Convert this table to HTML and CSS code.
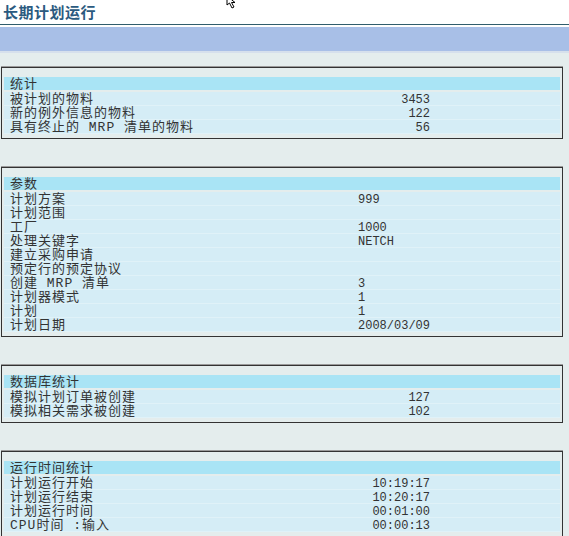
FILE: index.html
```html
<!DOCTYPE html>
<html lang="zh-CN">
<head>
<meta charset="utf-8">
<title>长期计划运行</title>
<link rel="stylesheet" href="styles.css">
</head>
<body>
<div class="top">
  <div class="title">长期计划运行</div>
  <div class="band"></div>
  <div class="band-edge"></div>
</div>
<svg class="cursor" width="12" height="10" viewBox="0 0 12 10"><path d="M1 -4 L1 5 L3.5 3 L6 8 L8 7 L5.5 2.5 L9 2.5 Z" fill="#fff" stroke="#000" stroke-width="1"/></svg>
<main class="content">
  <section class="box">
    <div class="hdr">统计</div>
    <div class="row"><span class="lbl">被计划的物料</span><span class="val r">3453</span></div>
    <div class="row"><span class="lbl">新的例外信息的物料</span><span class="val r">122</span></div>
    <div class="row"><span class="lbl">具有终止的 MRP 清单的物料</span><span class="val r">56</span></div>
  </section>
  <section class="box">
    <div class="hdr">参数</div>
    <div class="row"><span class="lbl">计划方案</span><span class="val">999</span></div>
    <div class="row"><span class="lbl">计划范围</span><span class="val"></span></div>
    <div class="row"><span class="lbl">工厂</span><span class="val">1000</span></div>
    <div class="row"><span class="lbl">处理关键字</span><span class="val">NETCH</span></div>
    <div class="row"><span class="lbl">建立采购申请</span><span class="val"></span></div>
    <div class="row"><span class="lbl">预定行的预定协议</span><span class="val"></span></div>
    <div class="row"><span class="lbl">创建 MRP 清单</span><span class="val">3</span></div>
    <div class="row"><span class="lbl">计划器模式</span><span class="val">1</span></div>
    <div class="row"><span class="lbl">计划</span><span class="val">1</span></div>
    <div class="row"><span class="lbl">计划日期</span><span class="val">2008/03/09</span></div>
  </section>
  <section class="box">
    <div class="hdr">数据库统计</div>
    <div class="row"><span class="lbl">模拟计划订单被创建</span><span class="val r">127</span></div>
    <div class="row"><span class="lbl">模拟相关需求被创建</span><span class="val r">102</span></div>
  </section>
  <section class="box">
    <div class="hdr">运行时间统计</div>
    <div class="row"><span class="lbl">计划运行开始</span><span class="val r">10:19:17</span></div>
    <div class="row"><span class="lbl">计划运行结束</span><span class="val r">10:20:17</span></div>
    <div class="row"><span class="lbl">计划运行时间</span><span class="val r">00:01:00</span></div>
    <div class="row"><span class="lbl">CPU时间 :输入</span><span class="val r">00:00:13</span></div>
  </section>
</main>
</body>
</html>
```
FILE: styles.css
```css
html, body {
  margin: 0;
  padding: 0;
}
body {
  background: #e4eded;
  width: 569px;
  height: 536px;
  overflow: hidden;
  position: relative;
  font-family: "Liberation Mono", "Noto Sans CJK SC", monospace;
  color: #2a2a2a;
}
.top {
  background: #ffffff;
}
.title {
  height: 25px;
  box-sizing: border-box;
  border-bottom: 1px solid #2f5d6c;
  padding-left: 3px;
  font-family: "Noto Sans CJK SC", sans-serif;
  font-weight: bold;
  font-size: 15px;
  letter-spacing: 0.5px;
  line-height: 24px;
  color: #2b5a80;
}
.band {
  margin-top: 2px;
  height: 24px;
  background: #a8bfe7;
}
.band-edge {
  height: 2px;
  background: #d6e0ec;
}
.cursor {
  position: absolute;
  left: 226px;
  top: 0;
}
.content {
  display: flex;
  flex-direction: column;
  gap: 28px;
  padding-top: 14px;
}
.box {
  margin-left: 1px;
  width: 562px;
  box-sizing: border-box;
  border: 1px solid #333;
  box-shadow: 0 -1px 0 #9a9a9a;
  padding: 9px 2px 4px 2px;
}
.hdr {
  height: 13px;
  line-height: 15px;
  margin-bottom: 2px;
  background: #a9e4f5;
  padding-left: 6px;
  font-size: 13px;
  letter-spacing: 1px;
  color: #333;
}
.row {
  display: grid;
  grid-template-columns: 354px 72px 1fr;
  height: 14px;
  line-height: 16px;
  box-sizing: border-box;
  background: #d5edf6;
  border-bottom: 1px solid #e0f2f8;
  color: #333;
}
.lbl {
  padding-left: 6px;
  font-size: 13px;
  letter-spacing: 1px;
  white-space: nowrap;
}
.val {
  font-family: "Liberation Mono", monospace;
  font-size: 12px;
  white-space: nowrap;
}
.val.r {
  text-align: right;
}
```
